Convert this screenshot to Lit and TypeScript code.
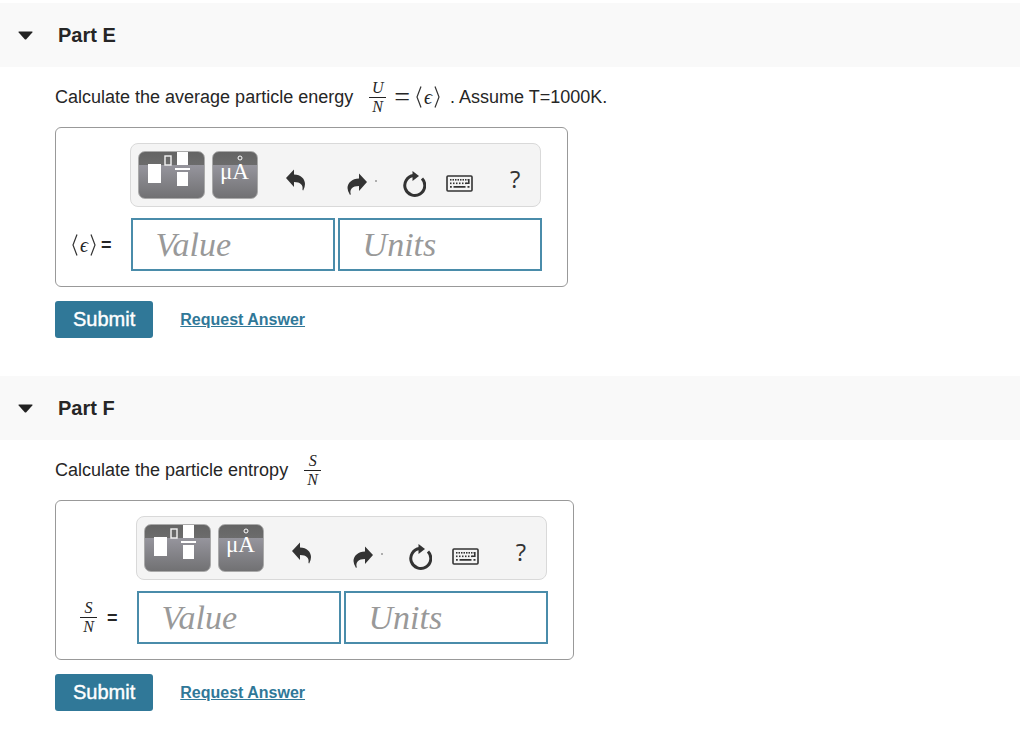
import { LitElement, html, css, svg, nothing, type TemplateResult } from "lit";
import { customElement, property, state } from "lit/decorators.js";

const fractionCss = css`
  .frac {
    display: inline-flex;
    flex-direction: column;
    align-items: center;
    vertical-align: middle;
    width: 17px;
    margin: 0 10px 0 8px;
    font: italic 16px/18px "Liberation Serif", "Times New Roman", serif;
  }
  .num {
    align-self: stretch;
    text-align: center;
    border-bottom: 1px solid #222;
  }
  .mean {
    display: inline-flex;
    align-items: center;
    vertical-align: middle;
    gap: 2px;
    font: italic 20px/24px "Liberation Serif", "DejaVu Serif", serif;
  }
  .angle {
    width: 6px;
    height: 22px;
    fill: none;
    stroke: #333;
    stroke-width: 1.2;
  }
`;

const frac = (a: string, b: string) =>
  html`<span class="frac"><span class="num">${a}</span><span>${b}</span></span>`;

const mean = () => html`<span class="mean">
  <svg class="angle" viewBox="0 0 6 22"><path d="M5 .5 1 11 5 21.5" /></svg>ϵ<svg class="angle" viewBox="0 0 6 22"><path d="M1 .5 5 11 1 21.5" /></svg>
</span>`;

@customElement("math-toolbar")
class MathToolbar extends LitElement {
  static styles = css`
    :host {
      display: block;
    }
    .bar {
      display: flex;
      box-sizing: border-box;
      height: 64px;
      padding: 7px;
      border: 1px solid #d9d9d9;
      border-radius: 8px;
      background: #f4f4f4;
    }
    button {
      display: block;
      box-sizing: border-box;
      height: 48px;
      padding: 0;
      border: 0;
      background: none;
      cursor: pointer;
    }
    svg {
      display: block;
      margin: 0 auto;
    }
    .dark {
      margin-right: 7px;
      border: 1px solid #aaa;
      border-radius: 7px;
      overflow: hidden;
      background: linear-gradient(#646464, #6c6c6c 13px, #96959d 13px, #717173);
    }
    .templates {
      width: 67px;
    }
    .units {
      width: 46px;
    }
    .undo {
      width: 63px;
    }
    .redo {
      width: 59px;
    }
    .reset {
      width: 53px;
    }
    .keys {
      width: 39px;
      padding-top: 16px;
    }
    .help {
      width: 35px;
      margin-left: auto;
      padding-top: 8px;
      color: #333;
      font: 24px/40px "Open Sans", "Noto Sans", sans-serif;
    }
    .glyph {
      font: 23px "Liberation Serif", serif;
    }
  `;

  private keyboard() {
    const dots: [number, number][] = [];
    for (let i = 0; i < 8; i++) dots.push([4 + i * 2.5, 4]);
    for (let i = 0; i < 6; i++) dots.push([4 + i * 3, 7.5]);
    return svg`<rect x="1" y="1" width="25" height="15" rx="1" fill="none" stroke="#333" stroke-width="1.6"/>
      ${dots.map(([x, y]) => svg`<rect x=${x} y=${y} width="1.5" height="1.6"/>`)}
      <path d="M22 4h1.600v5H20V7.400h2zM4 11h1.800v1.800H4zM7.500 11h12v1.800h-12zM21.500 11h2v1.800h-2z"/>`;
  }

  render() {
    return html`<div class="bar" role="toolbar" aria-label="Equation tools">
      <button class="dark templates" aria-label="Templates">
        <svg width="65" height="46" fill="#fff">
          <path d="M9 12h13v19H9zM38 0h11v13H38zM36 16h15v2H36zM38 20h11v14H38z" />
          <rect x="26" y="4" width="6" height="9" fill="none" stroke="#f4f4f4" stroke-width="1.4" />
        </svg>
      </button>
      <button class="dark units" aria-label="Symbols">
        <svg width="44" height="46" fill="#fff">
          <text class="glyph" x="7" y="27">μA</text>
          <circle cx="27" cy="6" r="2" fill="none" stroke="#fff" />
        </svg>
      </button>
      <button class="undo" aria-label="Undo">
        <svg width="20" height="48" fill="#333">
          <path d="M0 27 8 18.5v5c7 .2 11 4.5 11 9.500q0 3-1.800 6.500-1-.3-.7-1.200c.8-4-1.800-7.300-8.500-7.300v5z" />
        </svg>
      </button>
      <button class="redo" aria-label="Redo">
        <svg width="20" height="48" fill="#333" overflow="visible">
          <path d="M20 31 12 22.500v5C5 27.700.5 32 .5 37q0 3 2.500 7 1-.3.7-1.200C2.500 38.500 5.300 35 12 35v5z" />
          <circle cx="29" cy="30" r=".7" />
        </svg>
      </button>
      <button class="reset" aria-label="Reset">
        <svg width="25" height="48" fill="#333">
          <path d="M21 27.500a10 10 0 1 1-8.500-3" fill="none" stroke="#333" stroke-width="3" />
          <path d="M11.500 20 18 25 11.500 30z" />
        </svg>
      </button>
      <button class="keys" aria-label="Keyboard shortcuts">
        <svg width="27" height="17" fill="#333">${this.keyboard()}</svg>
      </button>
      <button class="help" aria-label="Help">?</button>
    </div>`;
  }
}

@customElement("answer-part")
class AnswerPart extends LitElement {
  static styles = [
    fractionCss,
    css`
      :host {
        display: block;
        color: #262626;
      }
      .head {
        display: flex;
        align-items: center;
        width: 100%;
        height: 64px;
        padding: 0 18px;
        border: 0;
        background: #f9f9f9;
        color: inherit;
        text-align: left;
      }
      .caret {
        width: 15px;
        height: 9px;
        fill: #222;
      }
      .shut .caret {
        transform: rotate(-90deg);
      }
      h2 {
        margin: 0;
      }
      .title {
        margin-left: 25px;
        font: bold 20px/24px "Liberation Sans", Arial, sans-serif;
      }
      .body {
        padding: 0 55px 38px;
      }
      .ask {
        display: flex;
        align-items: center;
        height: 60px;
        margin: 0;
        font: 18px/24px "Liberation Sans", Arial, sans-serif;
        white-space: pre;
      }
      .ask .frac {
        margin: 0 8px 0 11px;
      }
      .eq {
        margin: 0 6px 0 0;
        font: 28px/24px "Liberation Serif", serif;
      }
      .box {
        display: inline-grid;
        grid-template-columns: auto auto;
        row-gap: 11px;
        padding: 15px 25px 15px 16px;
        border: 1px solid #999;
        border-radius: 6px;
      }
      math-toolbar {
        grid-column: 2;
        margin-right: 1px;
      }
      .label {
        display: flex;
        align-items: center;
        padding-right: 18px;
        font: bold 18px/24px "Liberation Sans", Arial, sans-serif;
      }
      .label .mean {
        margin-right: 5px;
      }
      .fields {
        display: flex;
        gap: 3px;
        padding-left: 1px;
      }
      input {
        box-sizing: border-box;
        width: 204px;
        height: 53px;
        padding: 0 23px;
        border: 2px solid #4a8caa;
        border-radius: 0;
        background: #fff;
        color: #222;
        font: italic 34px/40px "Liberation Serif", "Times New Roman", serif;
      }
      input::placeholder {
        color: #999;
        opacity: 1;
      }
      .actions {
        display: flex;
        align-items: center;
        gap: 27px;
        margin-top: 14px;
      }
      .submit {
        height: 37px;
        padding: 0 18px;
        border: 0;
        border-radius: 3px;
        background: #307898;
        color: #fff;
        font: 20px/37px "Liberation Sans", Arial, sans-serif;
        -webkit-text-stroke: 0.4px #fff;
      }
      a {
        color: #307898;
        font: bold 16px/20px "Liberation Sans", Arial, sans-serif;
      }
    `,
  ];

  @property() name = "";
  @property({ attribute: false }) question: TemplateResult | typeof nothing = nothing;
  @property({ attribute: false }) symbol: TemplateResult | typeof nothing = nothing;
  @state() private open = true;

  render() {
    return html`<section>
      <h2>
        <button
          class="head ${this.open ? "" : "shut"}"
          aria-expanded=${this.open}
          @click=${() => (this.open = !this.open)}
        >
          <svg class="caret" viewBox="0 0 15 9"><path d="M1 .5h13q1 0 .3.9L8.500 8q-1 1-2 0L.7 1.400Q0 .5 1 .5z" /></svg>
          <span class="title">${this.name}</span>
        </button>
      </h2>
      ${this.open
        ? html`<div class="body">
            <p class="ask">${this.question}</p>
            <div class="box">
              <math-toolbar></math-toolbar>
              <label class="label" for="value">${this.symbol}=</label>
              <div class="fields">
                <input id="value" placeholder="Value" />
                <input aria-label="Units" placeholder="Units" />
              </div>
            </div>
            <div class="actions">
              <button class="submit">Submit</button>
              <a href="#answer">Request Answer</a>
            </div>
          </div>`
        : nothing}
    </section>`;
  }
}

@customElement("app-root")
class AppRoot extends LitElement {
  static styles = css`
    :host {
      display: block;
      padding: 3px 4px 0 0;
      background: #fff;
    }
  `;

  render() {
    return html`
      <answer-part
        name="Part E"
        .question=${html`Calculate the average particle energy ${frac("U", "N")}<span class="eq">=</span>${mean()}  . Assume T=1000K.`}
        .symbol=${mean()}
      ></answer-part>
      <answer-part
        name="Part F"
        .question=${html`Calculate the particle entropy ${frac("S", "N")}`}
        .symbol=${frac("S", "N")}
      ></answer-part>
    `;
  }
}
